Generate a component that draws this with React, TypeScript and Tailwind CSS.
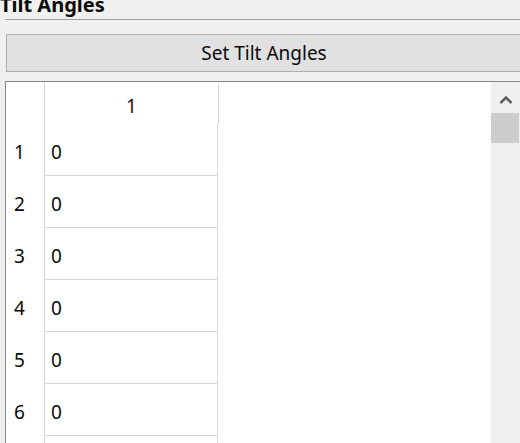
const rows = [1, 2, 3, 4, 5, 6, 7];

export default function App() {
  return (
    <div
      className="w-[520px] h-[443px] overflow-hidden bg-[#f0f0f0] text-black"
      style={{ fontFamily: '"Noto Sans", "Open Sans", sans-serif' }}
    >
      {/* Group title */}
      <div className="mt-[-8px] h-[27px] text-[20px] font-bold leading-[26px] text-[#0a0a0a]">
        Tilt Angles
      </div>
      <div className="ml-[5px] border-t border-[#a0a0a0]" />

      {/* Button */}
      <div className="mt-[14px] ml-[6px] mr-[-2px] h-[38px] flex items-center justify-center border border-[#adadad] bg-[#e1e1e1] text-[19px] text-[#0a0a0a]">
        Set Tilt Angles
      </div>

      {/* Table */}
      <div className="mt-[9px] ml-[5px] mr-[-10px] h-[420px] flex border border-[#828790] bg-white">
        <div className="flex flex-col">
          {/* header row */}
          <div className="flex shrink-0 h-[41px] mt-[1px]">
            <div className="w-[39px] border-r border-[#d8d8d8]" />
            <div className="w-[174px] border-r border-[#d8d8d8] flex items-center justify-center text-[19px] text-[#2a0a0a] pt-[5px]">
              1
            </div>
          </div>
          {rows.map((r) => (
            <div key={r} className="flex shrink-0 h-[52px]">
              <div className="w-[39px] border-r border-[#d8d8d8] flex items-center pl-[8px] pt-[5px] text-[19px] text-[#0a0a0a]">
                {r}
              </div>
              <div className="w-[173px] border-r border-b border-[#d8d8d8] flex items-center pl-[6px] pt-[5px] text-[19px] text-[#0a0a0a]">
                0
              </div>
            </div>
          ))}
        </div>
        <div className="flex-1" />

        {/* vertical scrollbar */}
        <div className="w-[38px] bg-[#f0f0f0] flex flex-col">
          <div className="h-[30px] flex items-center justify-center pr-[8px] mt-[1px]">
            <svg width="14" height="9" viewBox="0 0 14 9" className="mt-[3px]">
              <path d="M1.5 8 L7 2.5 L12.5 8" fill="none" stroke="#606060" strokeWidth="2.6" />
            </svg>
          </div>
          <div className="h-[30px] mr-[10px] bg-[#cdcdcd]" />
        </div>
      </div>
    </div>
  );
}
